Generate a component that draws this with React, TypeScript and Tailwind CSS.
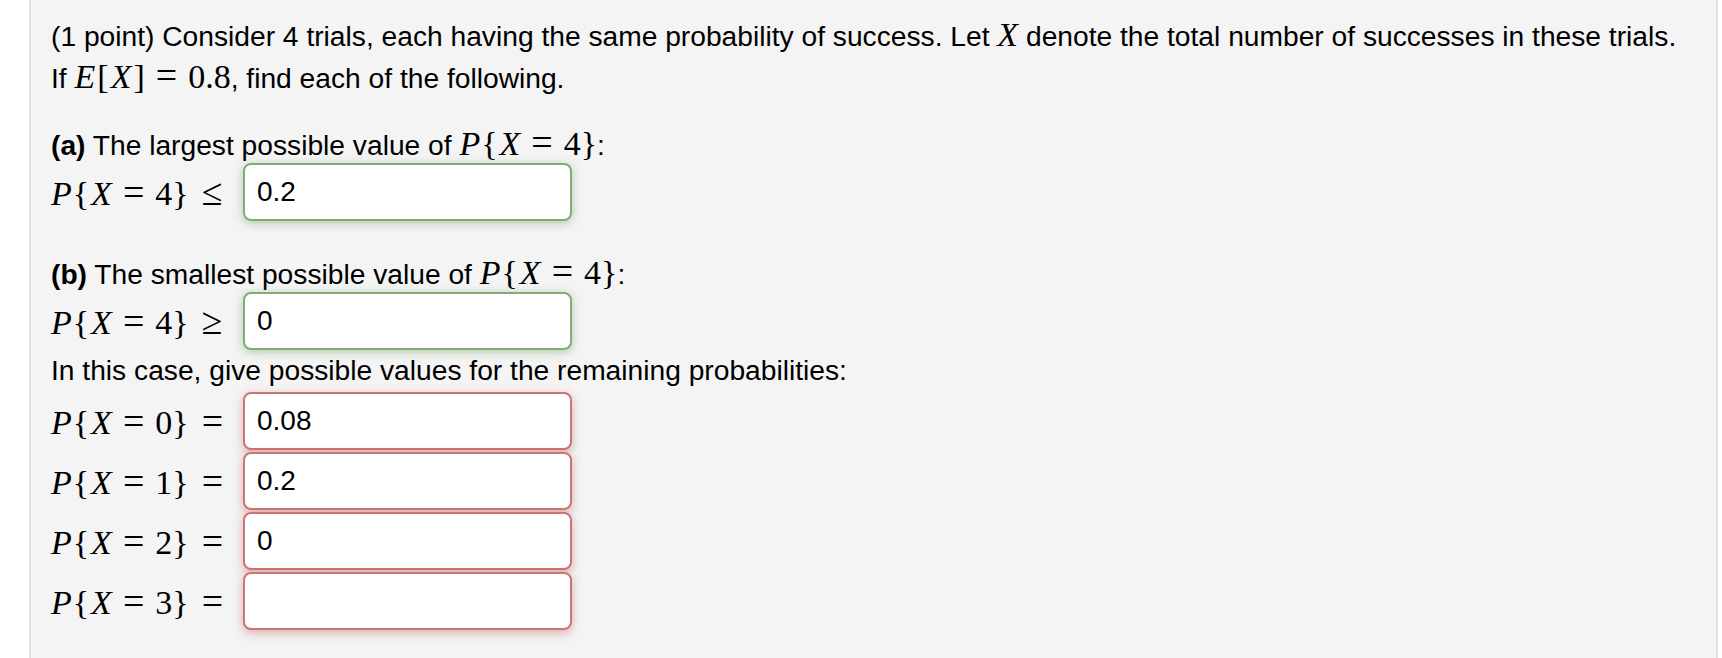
import type { ReactNode } from 'react'

const math = "font-['Liberation_Serif',serif] text-[34px]"
const rel = "font-['Liberation_Serif',serif] text-[38px]"

function Eq({ n }: { n: string }) {
  return (
    <span className={math}>
      <span className="italic">P</span>
      <span className="ml-[1px]">{'{'}</span>
      <span className="italic ml-[2px]">X</span>
      <span className={`${rel} mx-[11px]`}>=</span>
      <span>{n}</span>
      <span>{'}'}</span>
    </span>
  )
}

function Answer({ sign, n, value, ok }: { sign: string; n: string; value: string; ok: boolean }) {
  return (
    <div className="flex items-center h-[58px]">
      <div className="w-[192px] shrink-0 flex items-center">
        <Eq n={n} />
        <span className={`${rel} ml-[13px] leading-none`}>{sign}</span>
      </div>
      <input
        readOnly
        value={value}
        className={
          ok
            ? 'w-[329px] h-[58px] rounded-[8px] bg-white border-2 border-[#80ad76] pl-[12px] text-[28px] text-black outline-none shadow-[0_2px_10px_rgba(110,160,100,0.5)]'
            : 'w-[329px] h-[58px] rounded-[8px] bg-white border-2 border-[#c97676] pl-[12px] text-[28px] text-black outline-none shadow-[0_3px_10px_rgba(200,100,100,0.5)]'
        }
      />
    </div>
  )
}

function Line({ children, className = '' }: { children: ReactNode; className?: string }) {
  return <div className={`h-[40px] leading-[40px] whitespace-nowrap ${className}`}>{children}</div>
}

export default function App() {
  return (
    <div className="h-[658px] overflow-hidden bg-white flex pl-[29px] pr-[4px] font-['Liberation_Sans',Arial,sans-serif] text-[28.2px] text-black">
      <div className="flex-1 bg-[#f4f4f4] border-x-2 border-[#e2e2e2] pl-[20px] pt-[15px]">
        <Line>
          (1 point) Consider 4 trials, each having the same probability of success. Let{' '}
          <span className={`${math} italic`}>X</span> denote the total number of successes in these trials.
        </Line>
        <Line>
          If{' '}
          <span className={math}>
            <span className="italic">E</span>
            <span className="ml-[2px]">[</span>
            <span className="italic ml-[2px]">X</span>
            <span className="ml-[2px]">]</span>
            <span className={`${rel} mx-[11px]`}>=</span>
            <span>0.8</span>
          </span>
          , find each of the following.
        </Line>

        <Line className="mt-[27px]">
          <b>(a)</b> The largest possible value of <Eq n="4" />:
        </Line>
        <div className="mt-[1px]">
          <Answer sign="≤" n="4" value="0.2" ok />
        </div>

        <Line className="mt-[30px]">
          <b>(b)</b> The smallest possible value of <Eq n="4" />:
        </Line>
        <div className="mt-[1px]">
          <Answer sign="≥" n="4" value="0" ok />
        </div>

        <Line>In this case, give possible values for the remaining probabilities:</Line>
        <div className="mt-[2px] flex flex-col gap-[2px]">
          <Answer sign="=" n="0" value="0.08" ok={false} />
          <Answer sign="=" n="1" value="0.2" ok={false} />
          <Answer sign="=" n="2" value="0" ok={false} />
          <Answer sign="=" n="3" value="" ok={false} />
        </div>
      </div>
    </div>
  )
}
